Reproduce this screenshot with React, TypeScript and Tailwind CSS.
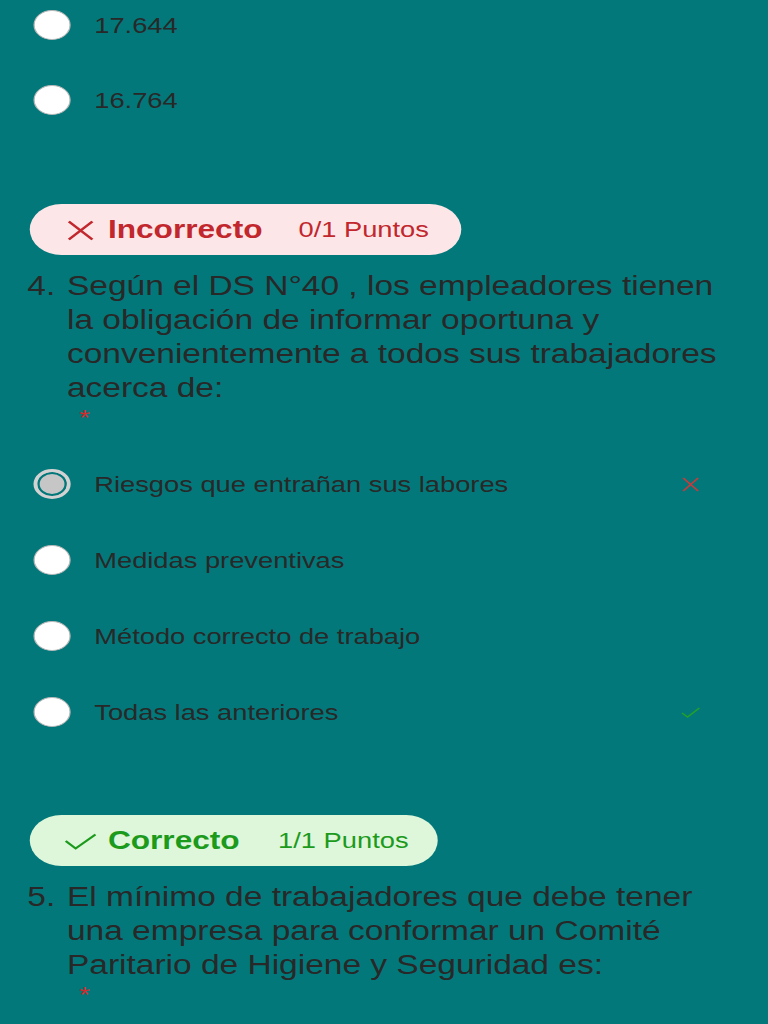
const font = { fontFamily: '"Liberation Sans", Arial, sans-serif' };

// The screenshot is stretched sideways; build at natural width and widen it.
function Radio({ selected = false }: { selected?: boolean }) {
  if (selected) {
    return (
      <div className="w-[30px] h-[30px] shrink-0 rounded-full bg-[#c6c6c6] border-[3px] border-[#d2d2d2] shadow-[inset_0_0_0_2px_#03787a]" />
    );
  }
  return (
    <div className="w-[30px] h-[30px] shrink-0 rounded-full bg-white border border-[#b8b8b8]" />
  );
}

function Option({
  label,
  selected,
  mark,
}: {
  label: string;
  selected?: boolean;
  mark?: "x" | "check";
}) {
  return (
    <div className="flex items-center h-[30px] pl-[27px] pr-[55px]">
      <Radio selected={selected} />
      <span className="ml-[19px] text-[22px] text-[#282828] flex-1">{label}</span>
      {mark === "x" && (
        <svg width="14" height="15" viewBox="0 0 14 15" className="mt-[1px]">
          <path d="M1 1 L13 14 M13 1 L1 14" stroke="#c93a3a" strokeWidth="1.4" fill="none" />
        </svg>
      )}
      {mark === "check" && (
        <svg width="16" height="13" viewBox="0 0 16 13" className="mt-[1px] -mr-[1px]">
          <path d="M1 7 L5.5 11 L15 2" stroke="#22a02a" strokeWidth="1.4" fill="none" />
        </svg>
      )}
    </div>
  );
}

function Badge({ ok }: { ok: boolean }) {
  return (
    <div
      className={`ml-[24px] h-[51px] rounded-full flex items-center ${
        ok ? "w-[329px] bg-[#def6da] text-[#1c9a1c]" : "w-[348px] bg-[#fde6e7] text-[#c1272d]"
      }`}
    >
      {ok ? (
        <svg width="26" height="17" viewBox="0 0 26 17" className="ml-[28px] mt-[2px]">
          <path d="M1 8 L9 15.5 L25 1.5" stroke="#1c9a1c" strokeWidth="2" fill="none" />
        </svg>
      ) : (
        <svg width="22" height="21" viewBox="0 0 22 21" className="ml-[30px] mt-[1px]">
          <path d="M1.5 1.5 L20.5 19.5 M20.5 1.5 L1.5 19.5" stroke="#c1272d" strokeWidth="2.4" fill="none" />
        </svg>
      )}
      <span className={`text-[25.5px] font-bold ${ok ? "ml-[9px]" : "ml-[11px]"}`}>
        {ok ? "Correcto" : "Incorrecto"}
      </span>
      <span className={`text-[22px] ${ok ? "ml-[31px]" : "ml-[29px]"}`}>
        {ok ? "1/1 Puntos" : "0/1 Puntos"}
      </span>
    </div>
  );
}

function Question({ num, lines }: { num: string; lines: string[] }) {
  return (
    <div className="flex pl-[22px] text-[#282828] text-[27px] leading-[34px]">
      <span className="w-[32px] shrink-0">{num}</span>
      <div>
        {lines.map((l) => (
          <div key={l} className="whitespace-nowrap">{l}</div>
        ))}
        <div className="text-[#d22a2a] text-[22px] leading-[22px] ml-[10px] mt-[2px]">*</div>
      </div>
    </div>
  );
}

export default function App() {
  return (
    <div className="w-[768px] h-[1024px] overflow-hidden bg-[#03787a]" style={font}>
      <div className="w-[619px] origin-top-left scale-x-[1.24]">
        <div className="pt-[10px] flex flex-col gap-[45px]">
          <Option label="17.644" />
          <Option label="16.764" />
        </div>

        <div className="mt-[89px]">
          <Badge ok={false} />
        </div>

        <div className="mt-[14px]">
          <Question
            num="4."
            lines={[
              "Según el DS N°40 , los empleadores tienen",
              "la obligación de informar oportuna y",
              "convenientemente a todos sus trabajadores",
              "acerca de:",
            ]}
          />
        </div>

        <div className="mt-[40px] flex flex-col gap-[46px]">
          <Option label="Riesgos que entrañan sus labores" selected mark="x" />
          <Option label="Medidas preventivas" />
          <Option label="Método correcto de trabajo" />
          <Option label="Todas las anteriores" mark="check" />
        </div>

        <div className="mt-[88px]">
          <Badge ok />
        </div>

        <div className="mt-[14px]">
          <Question
            num="5."
            lines={[
              "El mínimo de trabajadores que debe tener",
              "una empresa para conformar un Comité",
              "Paritario de Higiene y Seguridad es:",
            ]}
          />
        </div>
      </div>
    </div>
  );
}
